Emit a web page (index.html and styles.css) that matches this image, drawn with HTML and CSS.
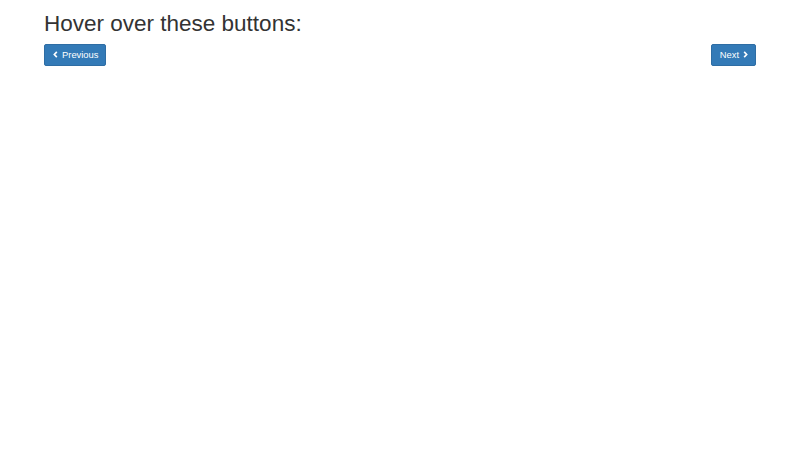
FILE: index.html
```html
<!DOCTYPE html>
<html lang="en">
<head>
  <meta charset="UTF-8">
  <meta name="viewport" content="width=device-width, initial-scale=1.0">
  <title>Pager buttons</title>
  <link rel="stylesheet" href="styles.css">
</head>
<body>

<div class="container">
  <h2 class="title">Hover over these buttons:</h2>

  <div class="pager">
    <a href="#" class="btn">
      <svg class="chevron" viewBox="0 0 6 8" width="5" height="7">
        <polyline points="4.6,0.8 1.6,4 4.6,7.2" />
      </svg>
      Previous
    </a>
    <a href="#" class="btn">
      Next
      <svg class="chevron" viewBox="0 0 6 8" width="5" height="7">
        <polyline points="1.4,0.8 4.4,4 1.4,7.2" />
      </svg>
    </a>
  </div>
</div>

</body>
</html>
```

FILE: styles.css
```css
body {
  font-family: "Liberation Sans", Arial, sans-serif;
  color: #333;
  background: #fff;
  margin: 0;
  padding: 0;
}
.container {
  padding: 0 44px;
}
.title {
  font-size: 22.5px;
  font-weight: normal;
  line-height: 1.1;
  margin: 12px 0 7px;
}
.pager {
  display: flex;
  justify-content: space-between;
}
.btn {
  display: inline-flex;
  align-items: center;
  gap: 4px;
  height: 22px;
  box-sizing: border-box;
  padding: 0 7px 0 8px;
  font-size: 9.4px;
  color: #fff;
  text-decoration: none;
  background-color: #337ab7;
  border: 1px solid #2e6da4;
  border-radius: 2px;
}
.btn:hover {
  background-color: #286090;
  border-color: #204d74;
}
.chevron {
  fill: none;
  stroke: #fff;
  stroke-width: 2;
}
```
